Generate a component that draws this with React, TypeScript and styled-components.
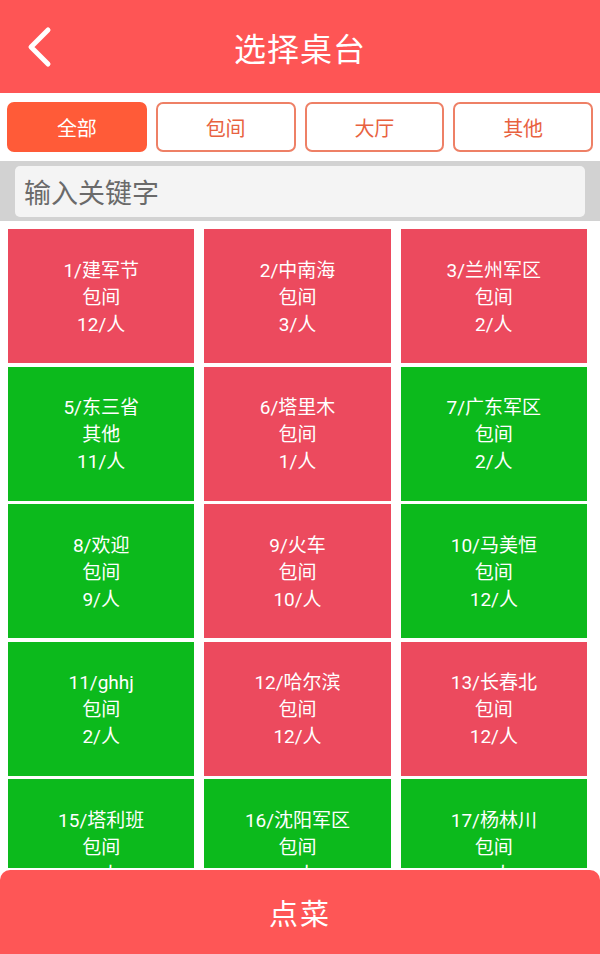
import React from "react";
import styled, { createGlobalStyle } from "styled-components";

const GlobalStyle = createGlobalStyle`
  html, body {
    margin: 0;
    padding: 0;
    background: #ffffff;
  }
  * {
    box-sizing: border-box;
  }
`;

interface ITable {
  id: number;
  name: string;
  kind: string;
  seats: number;
  busy: boolean;
}

const tables: ITable[] = [
  { id: 1, name: "建军节", kind: "包间", seats: 12, busy: true },
  { id: 2, name: "中南海", kind: "包间", seats: 3, busy: true },
  { id: 3, name: "兰州军区", kind: "包间", seats: 2, busy: true },
  { id: 5, name: "东三省", kind: "其他", seats: 11, busy: false },
  { id: 6, name: "塔里木", kind: "包间", seats: 1, busy: true },
  { id: 7, name: "广东军区", kind: "包间", seats: 2, busy: false },
  { id: 8, name: "欢迎", kind: "包间", seats: 9, busy: false },
  { id: 9, name: "火车", kind: "包间", seats: 10, busy: true },
  { id: 10, name: "马美恒", kind: "包间", seats: 12, busy: false },
  { id: 11, name: "ghhj", kind: "包间", seats: 2, busy: false },
  { id: 12, name: "哈尔滨", kind: "包间", seats: 12, busy: true },
  { id: 13, name: "长春北", kind: "包间", seats: 12, busy: true },
  { id: 15, name: "塔利班", kind: "包间", seats: 4, busy: false },
  { id: 16, name: "沈阳军区", kind: "包间", seats: 6, busy: false },
  { id: 17, name: "杨林川", kind: "包间", seats: 8, busy: false },
];

const tabs = ["全部", "包间", "大厅", "其他"];

const Page = styled.div`
  width: 600px;
  height: 954px;
  display: flex;
  flex-direction: column;
  font-family: Roboto, "Noto Sans CJK SC", sans-serif;
  background: #ffffff;
  overflow: hidden;
`;

const Header = styled.header`
  height: 93px;
  flex-shrink: 0;
  background: #fe5555;
  display: flex;
  align-items: center;
  justify-content: center;
  position: relative;
`;

const BackButton = styled.div`
  position: absolute;
  left: 24px;
  top: 26px;
  width: 34px;
  height: 42px;
`;

const Title = styled.h1`
  margin: 0;
  color: #ffffff;
  font-size: 32px;
  font-weight: 400;
  letter-spacing: 1px;
`;

const TabBar = styled.div`
  display: grid;
  grid-template-columns: repeat(4, 1fr);
  gap: 9px;
  padding: 9px 7px 9px 7px;
  flex-shrink: 0;
`;

const Tab = styled.div<{ active: boolean }>`
  height: 50px;
  border-radius: 7px;
  display: flex;
  align-items: center;
  justify-content: center;
  font-size: 20px;
  color: ${(props) => (props.active ? "#ffffff" : "#e8623f")};
  background: ${(props) => (props.active ? "#ff5b38" : "#ffffff")};
  border: 2px solid ${(props) => (props.active ? "#ff5b38" : "#ee8066")};
`;

const SearchBar = styled.div`
  background: #d2d2d2;
  padding: 5px 15px 4px 15px;
  flex-shrink: 0;
`;

const SearchInput = styled.div`
  height: 51px;
  border-radius: 5px;
  background: #f4f4f4;
  display: flex;
  align-items: center;
  padding-left: 9px;
  font-size: 27px;
  color: #6a6a6a;
`;

const TableArea = styled.div`
  flex: 1;
  overflow: hidden;
  padding: 8px 13px 0 8px;
`;

const TableGrid = styled.div`
  display: grid;
  grid-template-columns: repeat(3, 1fr);
  column-gap: 10px;
  row-gap: 3.5px;
`;

const TableCard = styled.div<{ busy: boolean }>`
  height: 134px;
  background: ${(props) => (props.busy ? "#ec4a5e" : "#0cba1c")};
  color: #ffffff;
  display: flex;
  flex-direction: column;
  align-items: center;
  justify-content: center;
  padding-top: 2px;
  font-size: 19px;
  line-height: 27px;
`;

const OrderButton = styled.button`
  height: 84px;
  flex-shrink: 0;
  margin-top: 2px;
  border: none;
  border-radius: 10px 10px 0 0;
  background: #fe5656;
  color: #ffffff;
  font-family: Roboto, "Noto Sans CJK SC", sans-serif;
  font-size: 29px;
  letter-spacing: 2px;
`;

const App: React.FC = () => {
  return (
    <Page>
      <GlobalStyle />
      <Header>
        <BackButton>
          <svg width="34" height="42" viewBox="0 0 34 42">
            <path
              d="M24 4 L7 21 L24 38"
              fill="none"
              stroke="#ffffff"
              strokeWidth="5"
              strokeLinecap="round"
              strokeLinejoin="round"
            />
          </svg>
        </BackButton>
        <Title>选择桌台</Title>
      </Header>
      <TabBar>
        {tabs.map((tab, i) => (
          <Tab key={tab} active={i === 0}>
            {tab}
          </Tab>
        ))}
      </TabBar>
      <SearchBar>
        <SearchInput>输入关键字</SearchInput>
      </SearchBar>
      <TableArea>
        <TableGrid>
          {tables.map((t) => (
            <TableCard key={t.id} busy={t.busy}>
              <div>
                {t.id}/{t.name}
              </div>
              <div>{t.kind}</div>
              <div>{t.seats}/人</div>
            </TableCard>
          ))}
        </TableGrid>
      </TableArea>
      <OrderButton>点菜</OrderButton>
    </Page>
  );
};

export default App;
